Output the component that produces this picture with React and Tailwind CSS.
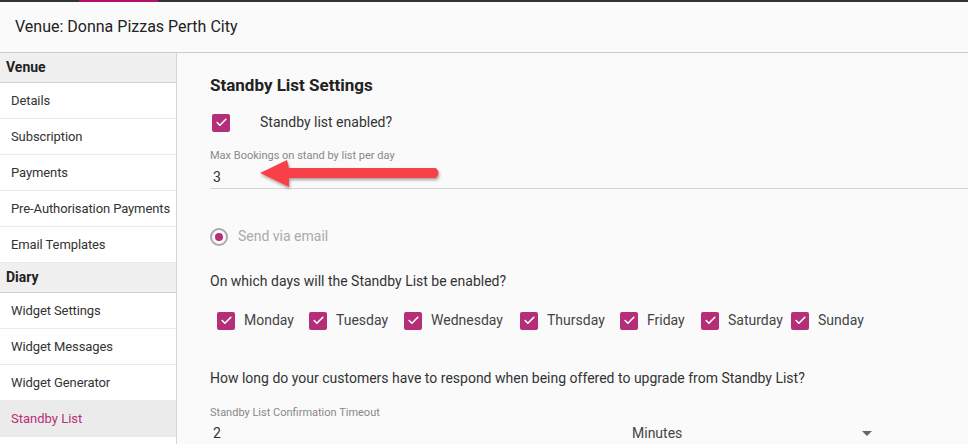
import { Check } from 'lucide-react'

const venueItems = ['Details', 'Subscription', 'Payments', 'Pre-Authorisation Payments', 'Email Templates']
const diaryItems = ['Widget Settings', 'Widget Messages', 'Widget Generator']
const days = [
  ['Monday', 'w-[92px]'],
  ['Tuesday', 'w-[95px]'],
  ['Wednesday', 'w-[116px]'],
  ['Thursday', 'w-[100px]'],
  ['Friday', 'w-[81px]'],
  ['Saturday', 'w-[90px]'],
  ['Sunday', 'w-[80px]'],
]

function Box() {
  return (
    <span className="flex h-[18px] w-[18px] shrink-0 items-center justify-center rounded-[2px] bg-[#b52f78]">
      <Check size={13} strokeWidth={3} className="text-white" />
    </span>
  )
}

function SectionHead({ children }) {
  return (
    <div className="flex h-[30px] items-center border-b border-[#d0d0d0] bg-[#f0f0f0] px-[6px] text-[14px] font-bold text-[#222]">
      {children}
    </div>
  )
}

function NavItem({ children, active }) {
  return (
    <div
      className={
        active
          ? 'flex h-[36px] items-center whitespace-nowrap bg-[#ebebeb] px-[11px] text-[13px] text-[#b52f78]'
          : 'flex h-[36px] items-center whitespace-nowrap border-b border-[#ebebeb] px-[11px] text-[13px] tracking-[-0.1px] text-[#333]'
      }
    >
      {children}
    </div>
  )
}

export default function App() {
  return (
    <div className="h-[444px] w-[968px] overflow-hidden bg-[#fafafa] font-['Roboto',sans-serif]">
      <div className="flex h-[2px] bg-[#333]">
        <div className="ml-[79px] w-[79px] bg-[#b0106a]" />
      </div>
      <header className="flex h-[51px] items-center border-b border-[#cccccc] px-[15px] text-[16px] text-[#222]">
        Venue: Donna Pizzas Perth City
      </header>
      <div className="flex">
        <aside className="h-[391px] w-[177px] shrink-0 overflow-hidden border-r border-[#d5d5d5] bg-white">
          <SectionHead>Venue</SectionHead>
          {venueItems.map((i) => (
            <NavItem key={i}>{i}</NavItem>
          ))}
          <SectionHead>Diary</SectionHead>
          {diaryItems.map((i) => (
            <NavItem key={i}>{i}</NavItem>
          ))}
          <NavItem active>Standby List</NavItem>
        </aside>
        <main className="min-w-0 flex-1 pl-[33px]">
          <h2 className="mt-[22px] text-[17px] font-bold leading-[20px] text-[#222]">Standby List Settings</h2>
          <div className="mt-[17px] flex items-center pl-[2px]">
            <Box />
            <span className="ml-[30px] text-[14px] text-[#333]">Standby list enabled?</span>
          </div>
          <div className="mt-[16px] border-b border-[#d5d5d5] pb-[1px]">
            <div className="text-[11px] leading-[13px] text-[#888]">Max Bookings on stand by list per day</div>
            <div className="relative mt-[5px] pl-[3px] text-[14px] leading-[20px] text-[#333]">
              3
              <svg className="absolute left-[47px] top-[-9px]" width="190" height="34" viewBox="0 0 190 34">
                <defs>
                  <filter id="sh" x="-10%" y="-30%" width="120%" height="160%">
                    <feDropShadow dx="1" dy="2" stdDeviation="1.5" floodColor="#000" floodOpacity="0.35" />
                  </filter>
                </defs>
                <g filter="url(#sh)">
                  <path d="M3 15 L30 2 L32 10 L179 10 Q184 15 179 20 L32 20 L32 29 Z" fill="#f8414a" />
                </g>
              </svg>
            </div>
          </div>
          <div className="mt-[37px] flex items-center">
            <span className="flex h-[18px] w-[18px] items-center justify-center rounded-full border-2 border-[#aaa]">
              <span className="h-[8px] w-[8px] rounded-full bg-[#b52f78]" />
            </span>
            <span className="ml-[10px] text-[14px] text-[#aaa]">Send via email</span>
          </div>
          <div className="mt-[24px] text-[14px] text-[#333]">On which days will the Standby List be enabled?</div>
          <div className="mt-[18px] flex items-center pl-[7px]">
            {days.map(([d, w]) => (
              <div key={d} className={'flex items-center ' + w}>
                <Box />
                <span className="ml-[9px] text-[14px] text-[#444]">{d}</span>
              </div>
            ))}
          </div>
          <div className="mt-[37px] text-[14px] text-[#333]">
            How long do your customers have to respond when being offered to upgrade from Standby List?
          </div>
          <div className="mt-[17px] text-[11px] leading-[13px] text-[#888]">Standby List Confirmation Timeout</div>
          <div className="mt-[4px] flex text-[14px] leading-[20px] text-[#333]">
            <span className="w-[422px] pl-[3px]">2</span>
            <span className="flex w-[240px] items-center justify-between text-[#444]">
              Minutes
              <span className="h-0 w-0 border-x-[5px] border-t-[5px] border-x-transparent border-t-[#666]" />
            </span>
          </div>
        </main>
      </div>
    </div>
  )
}
